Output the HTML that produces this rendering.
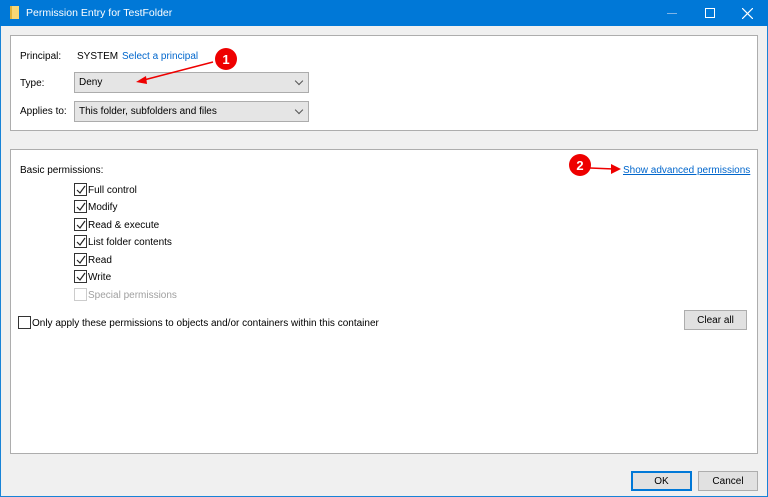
<!DOCTYPE html>
<html><head><meta charset="utf-8"><style>
*{box-sizing:border-box;margin:0;padding:0}
body{width:768px;height:497px;overflow:hidden;background:#f0f0f0;font-family:"Liberation Sans",sans-serif;font-size:10px;color:#000;position:relative}
.win{position:absolute;left:0;top:0;width:768px;height:497px;border:1px solid #1883d7;border-top:none}
.title{position:absolute;left:0;top:0;width:768px;height:26px;background:#0078d7;color:#fff;font-size:10.5px}
.abs{position:absolute}
.panel{position:absolute;background:#fff;border:1px solid #adadad}
.sel{position:absolute;background:#e5e5e5;border:1px solid #acacac;height:21px;padding:4px 4px;font-size:10px;line-height:12px}
.sel:after{content:"";position:absolute;right:6px;top:5px;width:5px;height:5px;border-right:1px solid #555;border-bottom:1px solid #555;transform:rotate(45deg)}
.cb{position:absolute;width:13px;height:13px;border:1px solid #333;background:#fff}
.cb svg{position:absolute;left:1px;top:1px}
.lbl{position:absolute;font-size:10px;line-height:13px;white-space:nowrap}
.btn{position:absolute;background:#e1e1e1;border:1px solid #adadad;text-align:center;font-size:10px;line-height:19px}
</style></head><body>
<div class="win"></div>
<div class="title">
 <div class="abs" style="left:10px;top:6px;width:9px;height:13px;background:#f8d775;border-left:2px solid #e0b43c"></div>
 <div class="abs" style="left:26px;top:7px">Permission Entry for TestFolder</div>
 <div class="abs" style="left:667px;top:13px;width:10px;height:1px;background:#7fb4e6"></div>
 <div class="abs" style="left:705px;top:8px;width:10px;height:10px;border:1px solid #fff"></div>
 <svg class="abs" style="left:742px;top:8px" width="11" height="11"><path d="M0 0L11 11M11 0L0 11" stroke="#fff" stroke-width="1.2"/></svg>
</div>
<div class="panel" style="left:10px;top:35px;width:748px;height:96px"></div>
<div class="lbl" style="left:20px;top:50px">Principal:</div>
<div class="lbl" style="left:77px;top:50px">SYSTEM</div>
<div class="lbl" style="left:122px;top:50px;color:#0066cc">Select a principal</div>
<div class="lbl" style="left:20px;top:77px">Type:</div>
<div class="sel" style="left:74px;top:72px;width:235px">Deny</div>
<div class="lbl" style="left:20px;top:105px">Applies to:</div>
<div class="sel" style="left:74px;top:101px;width:235px">This folder, subfolders and files</div>

<div class="panel" style="left:10px;top:149px;width:748px;height:305px"></div>
<div class="lbl" style="left:20px;top:164px">Basic permissions:</div>
<div class="lbl" style="left:623px;top:164px;color:#0066cc;text-decoration:underline">Show advanced permissions</div>

<div class="cb" style="left:74px;top:183px"><svg width="10" height="10"><path d="M1 5L4 8L9 1" stroke="#222" fill="none" stroke-width="1.2"/></svg></div><div class="lbl" style="left:88px;top:184px">Full control</div>
<div class="cb" style="left:74px;top:200px"><svg width="10" height="10"><path d="M1 5L4 8L9 1" stroke="#222" fill="none" stroke-width="1.2"/></svg></div><div class="lbl" style="left:88px;top:201px">Modify</div>
<div class="cb" style="left:74px;top:218px"><svg width="10" height="10"><path d="M1 5L4 8L9 1" stroke="#222" fill="none" stroke-width="1.2"/></svg></div><div class="lbl" style="left:88px;top:219px">Read &amp; execute</div>
<div class="cb" style="left:74px;top:235px"><svg width="10" height="10"><path d="M1 5L4 8L9 1" stroke="#222" fill="none" stroke-width="1.2"/></svg></div><div class="lbl" style="left:88px;top:236px">List folder contents</div>
<div class="cb" style="left:74px;top:253px"><svg width="10" height="10"><path d="M1 5L4 8L9 1" stroke="#222" fill="none" stroke-width="1.2"/></svg></div><div class="lbl" style="left:88px;top:254px">Read</div>
<div class="cb" style="left:74px;top:270px"><svg width="10" height="10"><path d="M1 5L4 8L9 1" stroke="#222" fill="none" stroke-width="1.2"/></svg></div><div class="lbl" style="left:88px;top:271px">Write</div>
<div class="cb" style="left:74px;top:288px;border-color:#ccc"></div><div class="lbl" style="left:88px;top:289px;color:#a0a0a0">Special permissions</div>

<div class="cb" style="left:18px;top:316px"></div><div class="lbl" style="left:32px;top:317px">Only apply these permissions to objects and/or containers within this container</div>
<div class="btn" style="left:684px;top:310px;width:63px;height:20px">Clear all</div>

<div class="btn" style="left:631px;top:471px;width:61px;height:20px;border:1px solid #0078d7;box-shadow:inset 0 0 0 1px #0078d7">OK</div>
<div class="btn" style="left:698px;top:471px;width:60px;height:20px">Cancel</div>

<svg class="abs" style="left:0;top:0" width="768" height="497">
 <path d="M213 62L140 81" stroke="#e00" stroke-width="1.5"/>
 <path d="M136 82L146 76L147 84Z" fill="#e00"/>
 <circle cx="226" cy="59" r="11" fill="#e00"/>
 <text x="226" y="64" font-family="Liberation Sans" font-size="13" font-weight="bold" fill="#fff" text-anchor="middle">1</text>
 <path d="M590 168L614 169" stroke="#e00" stroke-width="1.5"/>
 <path d="M621 169L611 164L611 174Z" fill="#e00"/>
 <circle cx="580" cy="165" r="11" fill="#e00"/>
 <text x="580" y="170" font-family="Liberation Sans" font-size="13" font-weight="bold" fill="#fff" text-anchor="middle">2</text>
</svg>
</body></html>
